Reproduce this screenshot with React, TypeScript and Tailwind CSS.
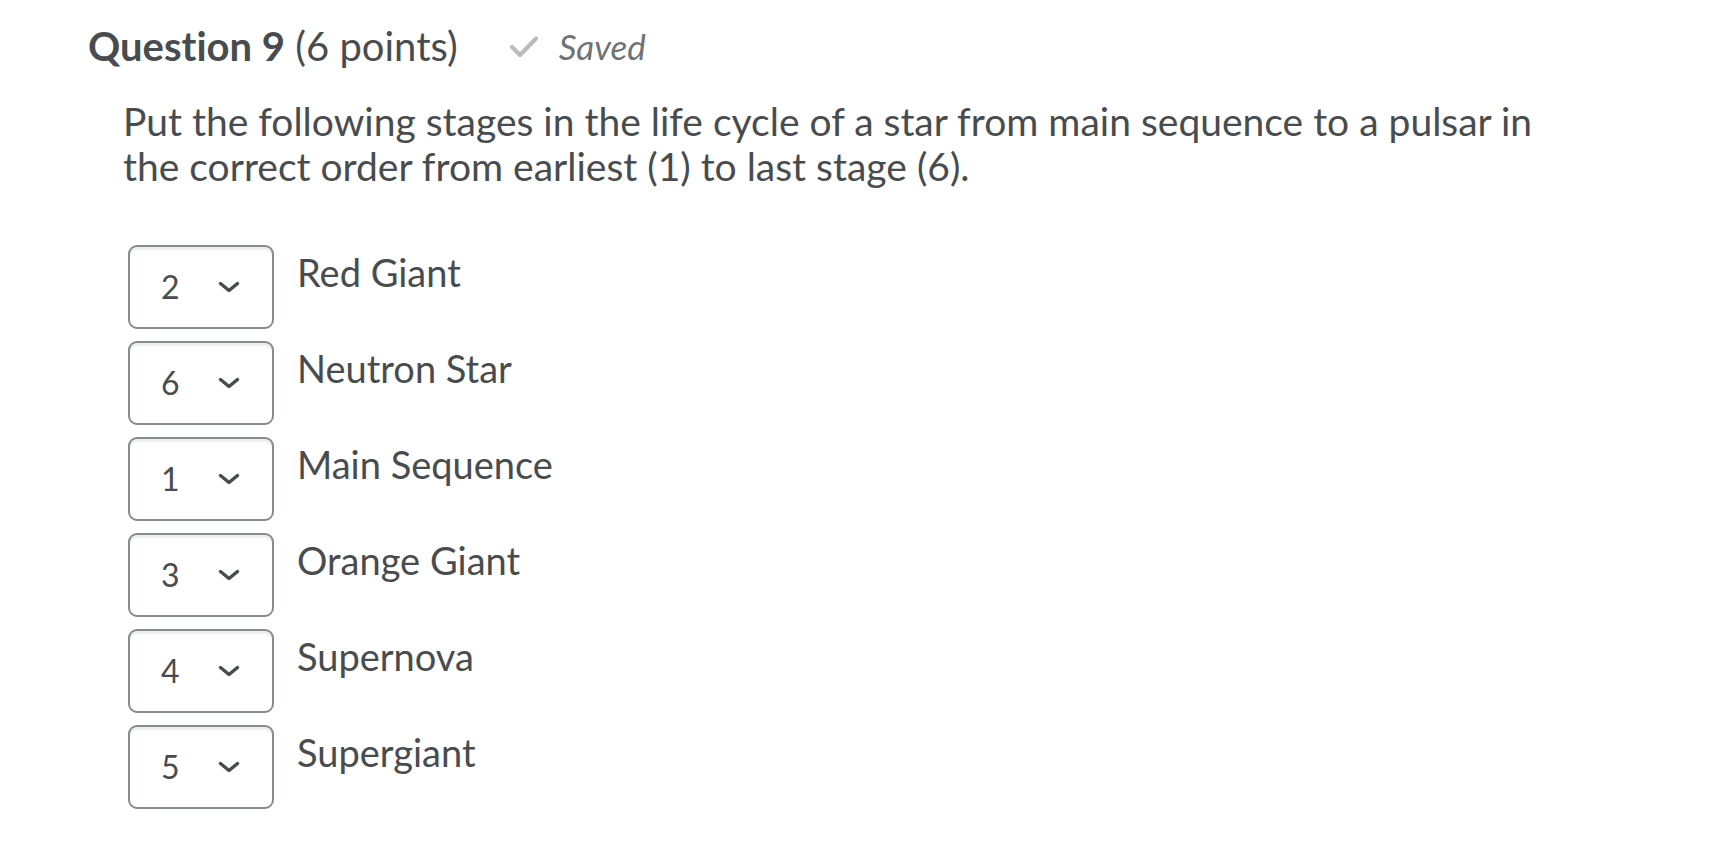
import React from "react";

const rows = [
  { v: "2", label: "Red Giant" },
  { v: "6", label: "Neutron Star" },
  { v: "1", label: "Main Sequence" },
  { v: "3", label: "Orange Giant" },
  { v: "4", label: "Supernova" },
  { v: "5", label: "Supergiant" },
];

function Chevron() {
  return (
    <svg width="22" height="12" viewBox="0 0 22 12" fill="none">
      <path d="M2.5 2.5 L11 9.5 L19.5 2.5" stroke="#494c4e" strokeWidth="3.5" strokeLinecap="round" strokeLinejoin="round" />
    </svg>
  );
}

function Check() {
  return (
    <svg width="30" height="23" viewBox="0 0 30 23" fill="none">
      <path d="M3 12 L11 20 L27 3.5" stroke="#b8bcbe" strokeWidth="4.2" strokeLinecap="round" strokeLinejoin="round" />
    </svg>
  );
}

export default function App() {
  return (
    <div
      className="min-h-screen bg-white text-[#494c4e] [font-variant-ligatures:none]"
      style={{ fontFamily: "Lato, 'Open Sans', sans-serif" }}
    >
      <div className="pl-[88px] pt-[23px]">
        <div className="flex items-center">
          <div className="text-[40px] leading-[46px]">
            <span className="font-bold">Question 9</span> (6 points)
          </div>
          <div className="ml-[51px] flex items-center gap-[20px] text-[#6e7376] italic text-[35px] leading-[46px]">
            <Check />
            <span>Saved</span>
          </div>
        </div>
        <div className="pl-[35px] pt-[30px]">
          <p className="max-w-[1440px] text-[39px] leading-[45px]">
            Put the following stages in the life cycle of a star from main sequence to a pulsar in the correct order from earliest (1) to last stage (6).
          </p>
          <div className="pl-[5px] pt-[56px] flex flex-col gap-[12px]">
            {rows.map((r) => (
              <div key={r.label} className="flex items-start gap-[23px]">
                <div className="w-[146px] h-[84px] shrink-0 rounded-[9px] border-2 border-[#878c8f] bg-white shadow-[inset_0_3px_0_0_#eef0f1] flex items-center pl-[31px] pr-[32px] justify-between">
                  <span className="text-[32px] leading-none">{r.v}</span>
                  <Chevron />
                </div>
                <div className="text-[38px] leading-[46px] pt-[4px]">{r.label}</div>
              </div>
            ))}
          </div>
        </div>
      </div>
    </div>
  );
}
